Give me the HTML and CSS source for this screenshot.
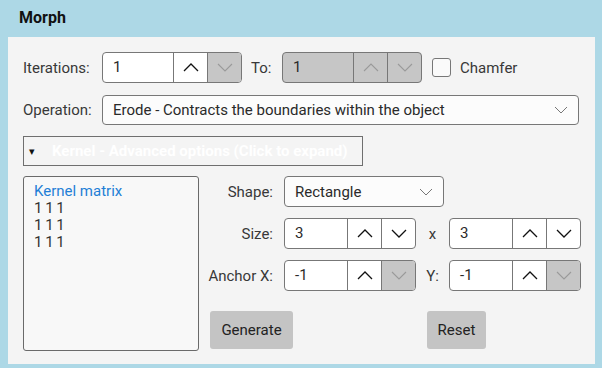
FILE: index.html
```html
<!DOCTYPE html>
<html>
<head>
<meta charset="utf-8">
<link rel="stylesheet" href="styles.css">
</head>
<body>
<div class="header">Morph</div>
<div class="panel">
  <div class="row row-iter">
    <span class="label lbl-main">Iterations:</span>
    <div class="spin w140">
      <span class="spin-val">1</span>
      <span class="spin-btn"><svg viewBox="0 0 16 9" class="chev"><path d="M1 8 L8 1 L15 8"/></svg></span>
      <span class="spin-btn dis"><svg viewBox="0 0 16 9" class="chev light"><path d="M1 1 L8 8 L15 1"/></svg></span>
    </div>
    <span class="label lbl-to">To:</span>
    <div class="spin w140 disabled">
      <span class="spin-val">1</span>
      <span class="spin-btn"><svg viewBox="0 0 16 9" class="chev light"><path d="M1 8 L8 1 L15 8"/></svg></span>
      <span class="spin-btn"><svg viewBox="0 0 16 9" class="chev light"><path d="M1 1 L8 8 L15 1"/></svg></span>
    </div>
    <span class="checkbox"></span>
    <span class="label">Chamfer</span>
  </div>
  <div class="row row-op">
    <span class="label lbl-main">Operation:</span>
    <div class="select op-select">
      <span>Erode - Contracts the boundaries within the object</span>
      <svg viewBox="0 0 14 8" class="sel-chev"><path d="M1 1 L7 7 L13 1"/></svg>
    </div>
  </div>
  <div class="kernel-bar"><span class="tri">&#9662;</span><span class="kb-text">Kernel - Advanced options (Click to expand)</span></div>
  <div class="kernel-area">
    <div class="matrix">
      <div class="mx-title">Kernel matrix</div>
      <div class="mx-row">1 1 1</div>
      <div class="mx-row">1 1 1</div>
      <div class="mx-row">1 1 1</div>
    </div>
    <div class="opts">
      <div class="opt-row">
        <span class="label olbl">Shape:</span>
        <div class="select shape-select">
          <span>Rectangle</span>
          <svg viewBox="0 0 14 8" class="sel-chev"><path d="M1 1 L7 7 L13 1"/></svg>
        </div>
      </div>
      <div class="opt-row">
        <span class="label olbl">Size:</span>
        <div class="spin w132">
          <span class="spin-val">3</span>
          <span class="spin-btn"><svg viewBox="0 0 16 9" class="chev"><path d="M1 8 L8 1 L15 8"/></svg></span>
          <span class="spin-btn"><svg viewBox="0 0 16 9" class="chev"><path d="M1 1 L8 8 L15 1"/></svg></span>
        </div>
        <span class="label mid">x</span>
        <div class="spin w132">
          <span class="spin-val">3</span>
          <span class="spin-btn"><svg viewBox="0 0 16 9" class="chev"><path d="M1 8 L8 1 L15 8"/></svg></span>
          <span class="spin-btn"><svg viewBox="0 0 16 9" class="chev"><path d="M1 1 L8 8 L15 1"/></svg></span>
        </div>
      </div>
      <div class="opt-row">
        <span class="label olbl">Anchor X:</span>
        <div class="spin w132">
          <span class="spin-val">-1</span>
          <span class="spin-btn"><svg viewBox="0 0 16 9" class="chev"><path d="M1 8 L8 1 L15 8"/></svg></span>
          <span class="spin-btn dis"><svg viewBox="0 0 16 9" class="chev light"><path d="M1 1 L8 8 L15 1"/></svg></span>
        </div>
        <span class="label mid">Y:</span>
        <div class="spin w132">
          <span class="spin-val">-1</span>
          <span class="spin-btn"><svg viewBox="0 0 16 9" class="chev"><path d="M1 8 L8 1 L15 8"/></svg></span>
          <span class="spin-btn dis"><svg viewBox="0 0 16 9" class="chev light"><path d="M1 1 L8 8 L15 1"/></svg></span>
        </div>
      </div>
      <div class="btn-row">
        <span class="btn gen">Generate</span>
        <span class="btn reset">Reset</span>
      </div>
    </div>
  </div>
</div>
</body>
</html>
```
FILE: styles.css
```css
html, body {
  margin: 0;
  padding: 0;
}
body {
  background: #add8e6;
  font-family: Roboto, "Liberation Sans", sans-serif;
  font-size: 15px;
  color: #2a2a2a;
  width: 602px;
  height: 368px;
  overflow: hidden;
}
.header {
  height: 37px;
  line-height: 36px;
  padding-left: 19px;
  font-size: 16px;
  font-weight: bold;
  color: #111;
  box-sizing: border-box;
}
.panel {
  margin-left: 8px;
  width: 587px;
  height: 327px;
  background: #f4f4f4;
  box-sizing: border-box;
  padding: 15px 16px 0 15px;
}
.row {
  display: flex;
  align-items: center;
  height: 31px;
}
.row-op {
  margin-top: 12px;
  height: 30px;
}
.label {
  color: #383838;
}
.lbl-main {
  width: 79px;
  flex: none;
}
.lbl-to {
  margin-left: 9px;
  width: 31px;
}
.spin {
  display: flex;
  height: 31px;
  box-sizing: border-box;
  border: 1px solid #777;
  border-radius: 4px;
  overflow: hidden;
  background: #fff;
  flex: none;
}
.w140 { width: 140px; }
.w132 { width: 132px; }
.spin-val {
  flex: 1;
  padding-left: 10px;
  line-height: 29px;
  border-right: 1px solid #777;
}
.spin-btn {
  width: 33px;
  display: flex;
  align-items: center;
  justify-content: center;
}
.spin-btn + .spin-btn {
  border-left: 1px solid #777;
}
.spin-btn.dis {
  background: #c6c6c6;
}
.spin.disabled {
  background: #c6c6c6;
}
.chev {
  width: 16px;
  height: 9px;
  fill: none;
  stroke: #111;
  stroke-width: 1.3;
}
.chev.light {
  stroke: #9a9a9a;
  stroke-width: 1.1;
}
.checkbox {
  width: 19px;
  height: 19px;
  border: 1px solid #777;
  border-radius: 3px;
  margin-left: 10px;
  margin-right: 9px;
  box-sizing: border-box;
  background: #fafafa;
}
.select {
  display: flex;
  align-items: center;
  justify-content: space-between;
  box-sizing: border-box;
  border: 1px solid #777;
  border-radius: 4px;
  background: #fcfcfc;
  padding: 0 10px 0 10px;
}
.op-select {
  flex: 1;
  height: 30px;
}
.sel-chev {
  width: 14px;
  height: 8px;
  fill: none;
  stroke: #777;
  stroke-width: 1;
}
.kernel-bar {
  margin-top: 11px;
  width: 340px;
  height: 30px;
  box-sizing: border-box;
  border: 1px solid #6f6f6f;
  display: flex;
  align-items: center;
  padding-left: 5px;
}
.tri {
  font-size: 11px;
  color: #111;
  width: 23px;
}
.kb-text {
  color: #fff;
  font-weight: bold;
}
.kernel-area {
  margin-top: 10px;
  display: flex;
}
.matrix {
  width: 176px;
  height: 175px;
  box-sizing: border-box;
  border: 1px solid #6a6a6a;
  border-radius: 3px;
  background: #f8f8f8;
  padding: 6px 10px;
  line-height: 17px;
  color: #333;
  flex: none;
}
.mx-title {
  color: #1f7fd6;
}
.mx-row {
  letter-spacing: -0.5px;
}
.opts {
  flex: 1;
  display: flex;
  flex-direction: column;
  gap: 11px;
}
.opt-row {
  display: flex;
  align-items: center;
  height: 31px;
}
.olbl {
  width: 74px;
  text-align: right;
  margin-right: 11px;
  flex: none;
}
.shape-select {
  width: 160px;
  height: 31px;
}
.mid {
  width: 33px;
  text-align: center;
}
.btn-row {
  display: flex;
  margin-top: 9px;
}
.btn {
  background: #c4c4c4;
  border-radius: 3px;
  height: 38px;
  line-height: 38px;
  text-align: center;
  color: #222;
}
.gen {
  margin-left: 11px;
  width: 83px;
}
.reset {
  margin-left: 134px;
  width: 59px;
}
```
